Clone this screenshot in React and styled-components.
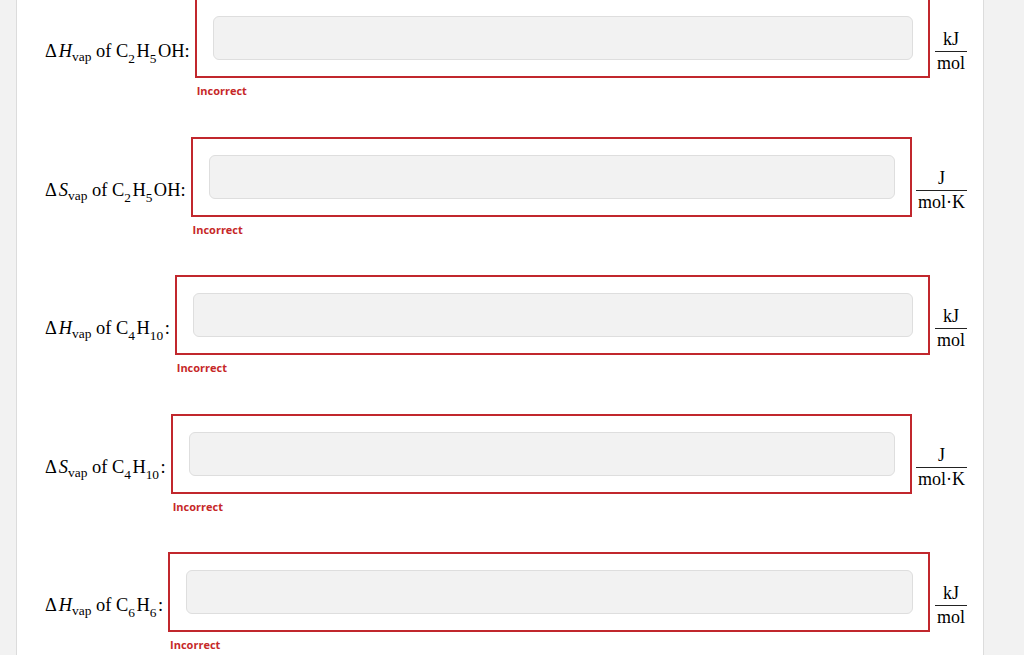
import React from 'react';
import styled, { createGlobalStyle } from 'styled-components';

const GlobalStyle = createGlobalStyle`
  html, body {
    margin: 0;
    padding: 0;
    background: #f2f2f2;
  }
  #root {
    min-height: 100vh;
  }
`;

const Panel = styled.div`
  box-sizing: border-box;
  width: 968px;
  min-height: 100vh;
  margin-left: 16px;
  background: #fff;
  border-left: 1px solid #dcdcdc;
  border-right: 1px solid #dcdcdc;
  padding: 0 16px 0 28px;
  overflow: hidden;
`;

const List = styled.div`
  margin-top: -2px;
  display: flex;
  flex-direction: column;
  gap: 37.5px;
`;

const Row = styled.div`
  display: flex;
  align-items: flex-start;
`;

const Label = styled.div`
  margin-top: 41px;
  margin-right: 5px;
  font-family: "Liberation Serif", "Times New Roman", serif;
  font-size: 18.4px;
  line-height: 24px;
  color: #000;
  white-space: nowrap;
`;

const Var = styled.i`
  margin-left: 2px;
`;

const Sub = styled.span`
  font-size: 13.4px;
  line-height: 0;
  position: relative;
  top: ${(p) => (p.$deep ? '6px' : '4px')};
  margin-right: ${(p) => (p.$deep ? '1.5px' : '0')};
`;

const Field = styled.div`
  flex: 1;
  min-width: 0;
`;

const Box = styled.div`
  box-sizing: border-box;
  height: 80px;
  padding: 16px 15px 16px 16px;
  border: 2px solid #c1272d;
`;

const Input = styled.input`
  display: block;
  box-sizing: border-box;
  width: 100%;
  height: 44px;
  margin: 0;
  padding: 0 10px;
  background: #f2f2f2;
  border: 1.5px solid #dedede;
  border-radius: 6px;
  outline: none;
`;

const Error = styled.div`
  margin-top: 5px;
  padding-left: 2px;
  font-family: "Open Sans", "Liberation Sans", sans-serif;
  font-size: 11px;
  font-weight: 700;
  line-height: 16px;
  color: #c62828;
`;

const Unit = styled.div`
  margin-top: 32px;
  margin-left: ${(p) => (p.$wide ? '4px' : '5px')};
  display: flex;
  flex-direction: column;
  align-items: stretch;
  font-family: "Liberation Serif", "Times New Roman", serif;
  font-size: 18px;
  line-height: 18px;
  color: #000;
  text-align: center;
  white-space: nowrap;
`;

const Num = styled.div`
  padding: 0 2px 3px;
  border-bottom: 1px solid #222;
`;

const Den = styled.div`
  padding: 2px 2px 0;
`;

const Formula = ({ text }) => {
  const parts = text.split(/_(\d+)/);
  return parts.map((part, i) =>
    i % 2 ? (
      <Sub key={i} $deep>
        {part}
      </Sub>
    ) : (
      <React.Fragment key={i}>{part}</React.Fragment>
    )
  );
};

const rows = [
  { q: 'H', formula: 'C_2H_5OH', unit: 'kJ' },
  { q: 'S', formula: 'C_2H_5OH', unit: 'J' },
  { q: 'H', formula: 'C_4H_10', unit: 'kJ' },
  { q: 'S', formula: 'C_4H_10', unit: 'J' },
  { q: 'H', formula: 'C_6H_6', unit: 'kJ' },
];

const App = () => {
  return (
    <>
      <GlobalStyle />
      <Panel>
        <List>
          {rows.map((r, i) => (
            <Row key={i}>
              <Label>
                Δ<Var>{r.q}</Var>
                <Sub>vap</Sub> of <Formula text={r.formula} />:
              </Label>
              <Field>
                <Box>
                  <Input type='text' />
                </Box>
                <Error>Incorrect</Error>
              </Field>
              <Unit $wide={r.unit === 'J'}>
                <Num>{r.unit}</Num>
                <Den>{r.unit === 'J' ? 'mol·K' : 'mol'}</Den>
              </Unit>
            </Row>
          ))}
        </List>
      </Panel>
    </>
  );
};

export default App;
